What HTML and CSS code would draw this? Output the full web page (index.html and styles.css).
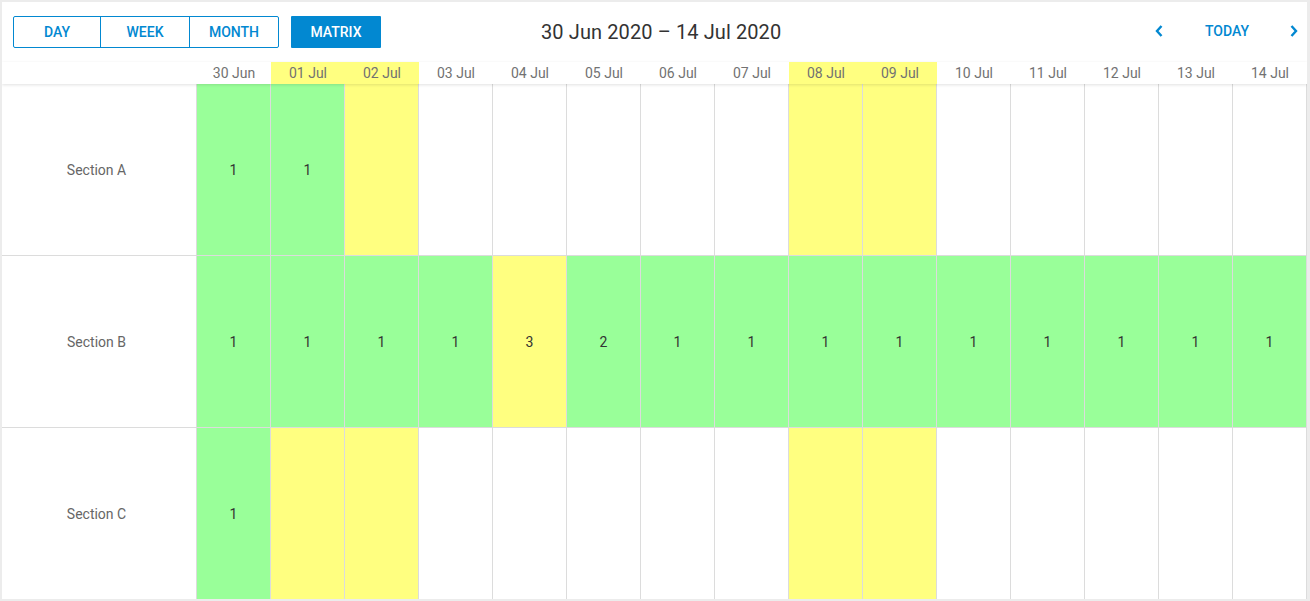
FILE: index.html
```html
<!DOCTYPE html>
<html>
<head>
<meta charset="utf-8">
<link rel="stylesheet" href="styles.css">
</head>
<body>
<div class="scheduler">
  <div class="navline">
    <div class="tabs">
      <div class="tab tab-day">DAY</div>
      <div class="tab tab-week">WEEK</div>
      <div class="tab tab-month">MONTH</div>
    </div>
    <div class="tab-matrix">MATRIX</div>
    <div class="title">30 Jun 2020 – 14 Jul 2020</div>
    <div class="navright">
      <span class="chev"><svg width="10" height="14" viewBox="0 0 10 14"><polyline points="7.5,2 3,7 7.5,12" fill="none" stroke="#0288d1" stroke-width="2.4"/></svg></span>
      <span class="today">TODAY</span>
      <span class="chev"><svg width="10" height="14" viewBox="0 0 10 14"><polyline points="2.5,2 7,7 2.5,12" fill="none" stroke="#0288d1" stroke-width="2.4"/></svg></span>
    </div>
  </div>
  <div class="dates">
    <div class="corner"></div>
    <div class="d">30 Jun</div>
    <div class="d y">01 Jul</div>
    <div class="d y">02 Jul</div>
    <div class="d">03 Jul</div>
    <div class="d">04 Jul</div>
    <div class="d">05 Jul</div>
    <div class="d">06 Jul</div>
    <div class="d">07 Jul</div>
    <div class="d y">08 Jul</div>
    <div class="d y">09 Jul</div>
    <div class="d">10 Jul</div>
    <div class="d">11 Jul</div>
    <div class="d">12 Jul</div>
    <div class="d">13 Jul</div>
    <div class="d">14 Jul</div>
  </div>
  <div class="grid">
    <div class="row">
      <div class="label">Section A</div>
      <div class="c g">1</div><div class="c g">1</div><div class="c y"></div><div class="c"></div><div class="c"></div><div class="c"></div><div class="c"></div><div class="c"></div><div class="c y"></div><div class="c y"></div><div class="c"></div><div class="c"></div><div class="c"></div><div class="c"></div><div class="c"></div>
    </div>
    <div class="row">
      <div class="label">Section B</div>
      <div class="c g">1</div><div class="c g">1</div><div class="c g">1</div><div class="c g">1</div><div class="c y">3</div><div class="c g">2</div><div class="c g">1</div><div class="c g">1</div><div class="c g">1</div><div class="c g">1</div><div class="c g">1</div><div class="c g">1</div><div class="c g">1</div><div class="c g">1</div><div class="c g">1</div>
    </div>
    <div class="row last">
      <div class="label">Section C</div>
      <div class="c g">1</div><div class="c y"></div><div class="c y"></div><div class="c"></div><div class="c"></div><div class="c"></div><div class="c"></div><div class="c"></div><div class="c y"></div><div class="c y"></div><div class="c"></div><div class="c"></div><div class="c"></div><div class="c"></div><div class="c"></div>
    </div>
  </div>
</div>
</body>
</html>
```
FILE: styles.css
```css
html, body {
  margin: 0;
  padding: 0;
  background: #ececec;
  width: 1310px;
  height: 601px;
  overflow: hidden;
}
* { box-sizing: border-box; }
.scheduler {
  margin: 2px 3px 0 2px;
  width: 1305px;
  height: 597px;
  background: #fff;
  font-family: Roboto, "Liberation Sans", sans-serif;
  overflow: hidden;
}
.navline {
  height: 60px;
  display: flex;
  align-items: flex-start;
  padding: 14px 0 0 11px;
}
.tabs {
  display: flex;
  border: 1px solid #0288d1;
  border-radius: 2px;
  height: 32px;
}
.tab {
  height: 30px;
  line-height: 30px;
  text-align: center;
  color: #0288d1;
  font-size: 14px;
  font-weight: 500;
}
.tab-day { width: 87px; border-right: 1px solid #0288d1; }
.tab-week { width: 89px; border-right: 1px solid #0288d1; }
.tab-month { width: 88px; }
.tab-matrix {
  margin-left: 12px;
  width: 90px;
  height: 32px;
  line-height: 32px;
  text-align: center;
  background: #0288d1;
  color: #fff;
  font-size: 14px;
  font-weight: 500;
  border-radius: 1px;
}
.title {
  margin-left: 160px;
  margin-top: 3px;
  font-size: 20px;
  letter-spacing: 0.1px;
  color: #333;
  line-height: 26px;
  white-space: nowrap;
}
.navright {
  margin-left: auto;
  display: flex;
  align-items: center;
  height: 32px;
  margin-top: -1px;
  padding-right: 6px;
}
.chev { display: flex; width: 14px; justify-content: center; }
.today {
  color: #0288d1;
  font-size: 14px;
  font-weight: 500;
  margin: 0 38px 0 39px;
}
.dates {
  display: flex;
  height: 22px;
  position: relative;
  z-index: 1;
  box-shadow: 0 1px 3px rgba(0,0,0,0.12);
  background: #fff;
}
.corner { width: 195px; }
.d {
  width: 74px;
  text-align: center;
  font-size: 14px;
  color: #727272;
  line-height: 23px;
}
.d.y { background: #ffff80; }
.grid { display: flex; flex-direction: column; }
.row {
  display: flex;
  height: 172px;
  border-bottom: 1px solid #dcdcdc;
}
.label {
  width: 195px;
  border-right: 1px solid #dcdcdc;
  display: flex;
  align-items: center;
  justify-content: center;
  padding-right: 5px;
  font-size: 14px;
  color: #666;
}
.c {
  width: 74px;
  border-right: 1px solid #dcdcdc;
  display: flex;
  align-items: center;
  justify-content: center;
  font-size: 14px;
  color: #333;
}
.c.g { background: #99ff99; }
.c.y { background: #ffff80; }
```
